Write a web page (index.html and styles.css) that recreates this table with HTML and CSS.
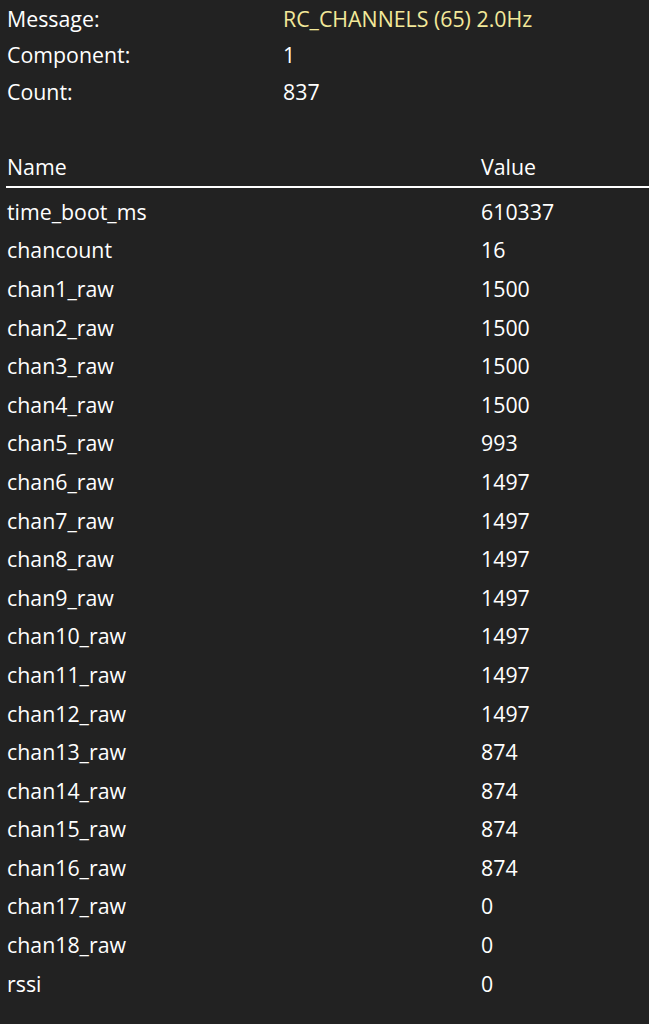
FILE: index.html
```html
<!DOCTYPE html>
<html>
<head>
<meta charset="utf-8">
<link rel="stylesheet" href="styles.css">
</head>
<body>
<div class="page">
  <div class="info">
    <div class="label">Message:</div><div class="val msg">RC_CHANNELS (65) 2.0Hz</div>
    <div class="label">Component:</div><div class="val">1</div>
    <div class="label">Count:</div><div class="val">837</div>
  </div>
  <div class="table">
    <div class="head">
      <div class="name">Name</div><div class="value">Value</div>
    </div>
    <div class="body">
      <div class="row"><div class="name">time_boot_ms</div><div class="value">610337</div></div>
      <div class="row"><div class="name">chancount</div><div class="value">16</div></div>
      <div class="row"><div class="name">chan1_raw</div><div class="value">1500</div></div>
      <div class="row"><div class="name">chan2_raw</div><div class="value">1500</div></div>
      <div class="row"><div class="name">chan3_raw</div><div class="value">1500</div></div>
      <div class="row"><div class="name">chan4_raw</div><div class="value">1500</div></div>
      <div class="row"><div class="name">chan5_raw</div><div class="value">993</div></div>
      <div class="row"><div class="name">chan6_raw</div><div class="value">1497</div></div>
      <div class="row"><div class="name">chan7_raw</div><div class="value">1497</div></div>
      <div class="row"><div class="name">chan8_raw</div><div class="value">1497</div></div>
      <div class="row"><div class="name">chan9_raw</div><div class="value">1497</div></div>
      <div class="row"><div class="name">chan10_raw</div><div class="value">1497</div></div>
      <div class="row"><div class="name">chan11_raw</div><div class="value">1497</div></div>
      <div class="row"><div class="name">chan12_raw</div><div class="value">1497</div></div>
      <div class="row"><div class="name">chan13_raw</div><div class="value">874</div></div>
      <div class="row"><div class="name">chan14_raw</div><div class="value">874</div></div>
      <div class="row"><div class="name">chan15_raw</div><div class="value">874</div></div>
      <div class="row"><div class="name">chan16_raw</div><div class="value">874</div></div>
      <div class="row"><div class="name">chan17_raw</div><div class="value">0</div></div>
      <div class="row"><div class="name">chan18_raw</div><div class="value">0</div></div>
      <div class="row"><div class="name">rssi</div><div class="value">0</div></div>
    </div>
  </div>
</div>
</body>
</html>
```
FILE: styles.css
```css
html, body {
  margin: 0;
  padding: 0;
  background: #222222;
  height: 100%;
}
.page {
  font-family: "Open Sans", "Noto Sans", sans-serif;
  font-size: 21.33px;
  color: #ffffff;
  padding-left: 6px;
}
.info {
  display: grid;
  grid-template-columns: 276px 1fr;
  grid-auto-rows: 36.5px;
  align-items: center;
  padding-left: 1px;
}
.msg {
  color: #f3e99a;
}
.table {
  margin-top: 37.5px;
}
.head, .row {
  display: grid;
  grid-template-columns: 474px 1fr;
  align-items: center;
  padding-left: 1px;
}
.head {
  height: 38.6px;
  border-bottom: 2px solid #ffffff;
}
.body {
  padding-top: 4.4px;
}
.row {
  height: 38.6px;
}
```
